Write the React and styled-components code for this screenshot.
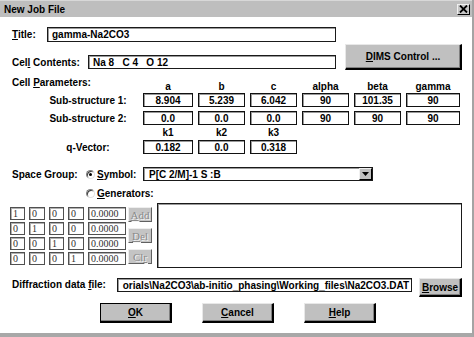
import styled, { createGlobalStyle } from "styled-components";

const GlobalStyle = createGlobalStyle`
  html, body {
    margin: 0;
    padding: 0;
    background: #ffffff;
  }
`;

const PARAM_COLS = "126px 50px 47px 47px 47px 47px 54px";

function Key({ children }) {
  return <u>{children}</u>;
}

function App() {
  const headers = ["a", "b", "c", "alpha", "beta", "gamma"];
  const sub1 = ["8.904", "5.239", "6.042", "90", "101.35", "90"];
  const sub2 = ["0.0", "0.0", "0.0", "90", "90", "90"];
  const kHeads = ["k1", "k2", "k3"];
  const qVec = ["0.182", "0.0", "0.318"];
  const gens = [
    ["1", "0", "0", "0", "0.0000"],
    ["0", "1", "0", "0", "0.0000"],
    ["0", "0", "1", "0", "0.0000"],
    ["0", "0", "0", "1", "0.0000"],
  ];
  const genWidths = [15, 16, 15, 16, 38];

  return (
    <>
      <GlobalStyle />
      <Dialog>
        <TitleBar>
          <TitleText>New Job File</TitleText>
          <CloseBtn>
            <svg width="9" height="8" viewBox="0 0 9 8">
              <path d="M1 0.5 L8 7.5 M8 0.5 L1 7.5" stroke="#000" strokeWidth="1.8" />
            </svg>
          </CloseBtn>
        </TitleBar>

        <Body>
          <TopSection>
            <TopFields>
              <FieldRow $h={15}>
                <Label $w={35}>
                  <Key>T</Key>itle:
                </Label>
                <TextBox $w={289} $h={15}>gamma-Na2CO3</TextBox>
              </FieldRow>
              <FieldRow $h={14} $top={13}>
                <Label $w={76}>
                  Cel<Key>l</Key> Contents:
                </Label>
                <TextBox $w={248} $h={14}>Na 8&nbsp;&nbsp;&nbsp;C 4&nbsp;&nbsp;&nbsp;O 12</TextBox>
              </FieldRow>
            </TopFields>
            <PushButton $w={117} $h={26} $top={17}>
              <Key>D</Key>IMS Control ...
            </PushButton>
          </TopSection>

          <ParamRow $h={15} $top={7}>
            <SectionLabel>
              Cell <Key>P</Key>arameters:
            </SectionLabel>
            {headers.map((h) => (
              <ColHead key={h}>{h}</ColHead>
            ))}
          </ParamRow>
          <ParamRow $h={14} $top={1}>
            <RowLabel>Sub-structure 1:</RowLabel>
            {sub1.map((v, i) => (
              <ValueBox key={i}>{v}</ValueBox>
            ))}
          </ParamRow>
          <ParamRow $h={14} $top={4}>
            <RowLabel>Sub-structure 2:</RowLabel>
            {sub2.map((v, i) => (
              <ValueBox key={i}>{v}</ValueBox>
            ))}
          </ParamRow>
          <ParamRow $h={11} $top={2}>
            <span />
            {kHeads.map((h) => (
              <ColHead key={h}>{h}</ColHead>
            ))}
          </ParamRow>
          <ParamRow $h={14} $top={2}>
            <RowLabel>q-Vector:</RowLabel>
            {qVec.map((v, i) => (
              <ValueBox key={i}>{v}</ValueBox>
            ))}
          </ParamRow>

          <FieldRow $h={14} $top={13}>
            <Label $w={74}>Space Group:</Label>
            <RadioOption $w={57}>
              <Radio $checked />
              <span>
                <Key>S</Key>ymbol:
              </span>
            </RadioOption>
            <Combo>
              <ComboText>P[C 2/M]-1 S :B</ComboText>
              <ComboArrow>
                <svg width="7" height="4" viewBox="0 0 7 4">
                  <path d="M0 0 H7 L3.5 4 Z" fill="#000" />
                </svg>
              </ComboArrow>
            </Combo>
          </FieldRow>
          <FieldRow $h={12} $top={6} $indent={74}>
            <RadioOption>
              <Radio />
              <span>
                <Key>G</Key>enerators:
              </span>
            </RadioOption>
          </FieldRow>

          <GenSection>
            <GenGrid>
              {gens.map((row, r) => (
                <GenRow key={r}>
                  {row.map((v, c) => (
                    <GenCell key={c} $w={genWidths[c]}>
                      {v}
                    </GenCell>
                  ))}
                </GenRow>
              ))}
            </GenGrid>
            <GenButtons>
              <SmallBtn>
                <Key>A</Key>dd
              </SmallBtn>
              <SmallBtn>
                <Key>D</Key>el
              </SmallBtn>
              <SmallBtn>
                Cl<Key>r</Key>
              </SmallBtn>
            </GenButtons>
            <ListBox />
          </GenSection>

          <FieldRow $h={19} $top={10} $align="flex-start">
            <Label $w={105} $line={14}>
              Diffraction data <Key>f</Key>ile:
            </Label>
            <PathBox>
              <span>orials\Na2CO3\ab-initio_phasing\Working_files\Na2CO3.DAT</span>
            </PathBox>
            <PushButton $w={43} $h={19} $left={7}>
              <Key>B</Key>rowse
            </PushButton>
          </FieldRow>

          <ButtonBar>
            <PushButton $w={72} $h={20} $default>
              <Key>O</Key>K
            </PushButton>
            <PushButton $w={72} $h={20}>
              <Key>C</Key>ancel
            </PushButton>
            <PushButton $w={72} $h={20}>
              <Key>H</Key>elp
            </PushButton>
          </ButtonBar>
        </Body>
      </Dialog>
    </>
  );
}

export default App;

const Dialog = styled.div`
  width: 474px;
  height: 337px;
  box-sizing: border-box;
  display: flex;
  flex-direction: column;
  background: #ffffff;
  border-right: 2px solid #a4a4a4;
  border-bottom: 4px solid #a8a8a8;
  overflow: hidden;
  font-family: "Liberation Sans", Arial, sans-serif;
  font-weight: bold;
  font-size: 10px;
  color: #000;

  u {
    text-decoration: underline;
    text-underline-offset: 1px;
  }
`;

const TitleBar = styled.div`
  height: 17px;
  flex: 0 0 17px;
  display: flex;
  align-items: center;
  justify-content: space-between;
  padding: 0 2px 0 4px;
  background: #bebebe;
  border-top: 1px solid #d8d8d8;
  box-sizing: border-box;
`;

const TitleText = styled.span`
  font-size: 10px;
  font-weight: bold;
`;

const CloseBtn = styled.div`
  width: 13px;
  height: 11px;
  box-sizing: border-box;
  display: flex;
  align-items: center;
  justify-content: center;
  background: #c6c6c6;
  border: 1px solid;
  border-color: #f0f0f0 #000 #000 #f0f0f0;
`;

const Body = styled.div`
  display: flex;
  flex-direction: column;
  padding: 0 10px 0 12px;
`;

const TopSection = styled.div`
  display: flex;
  justify-content: space-between;
  align-items: flex-start;
  margin-top: 10px;
`;

const TopFields = styled.div`
  display: flex;
  flex-direction: column;
`;

const FieldRow = styled.div`
  display: flex;
  align-items: ${({ $align }) => $align || "center"};
  height: ${({ $h }) => $h}px;
  margin-top: ${({ $top }) => $top || 0}px;
  padding-left: ${({ $indent }) => $indent || 0}px;
`;

const Label = styled.span`
  flex: 0 0 ${({ $w }) => $w}px;
  white-space: nowrap;
  line-height: ${({ $line }) => ($line ? `${$line}px` : "normal")};
`;

const TextBox = styled.div`
  width: ${({ $w }) => $w}px;
  height: ${({ $h }) => $h}px;
  box-sizing: border-box;
  border: 1px solid #1a1a1a;
  box-shadow: inset 1px 1px 0 #9a9a9a;
  padding: 0 4px;
  display: flex;
  align-items: center;
  white-space: pre;
  background: #fff;
`;

const PushButton = styled.div`
  width: ${({ $w }) => $w}px;
  height: ${({ $h }) => $h}px;
  margin-top: ${({ $top }) => $top || 0}px;
  margin-left: ${({ $left }) => $left || 0}px;
  box-sizing: border-box;
  flex: 0 0 auto;
  display: flex;
  align-items: center;
  justify-content: center;
  background: #c0c0c0;
  border-top: 1px solid ${({ $default }) => ($default ? "#000" : "#e8e8e8")};
  border-left: 1px solid ${({ $default }) => ($default ? "#000" : "#e8e8e8")};
  border-right: 2px solid #000;
  border-bottom: 2px solid #000;
  box-shadow: inset -1px -1px 0 #808080;
  white-space: nowrap;
`;

const ParamRow = styled.div`
  display: grid;
  grid-template-columns: ${PARAM_COLS};
  column-gap: 5px;
  height: ${({ $h }) => $h}px;
  margin-top: ${({ $top }) => $top || 0}px;
`;

const SectionLabel = styled.span`
  align-self: start;
  line-height: 12px;
  white-space: nowrap;
`;

const ColHead = styled.span`
  align-self: end;
  text-align: center;
  line-height: 11px;
`;

const RowLabel = styled.span`
  align-self: center;
  text-align: center;
  padding-left: 26px;
  white-space: nowrap;
`;

const ValueBox = styled.div`
  box-sizing: border-box;
  border: 1px solid #111;
  box-shadow: inset 1px 1px 0 #9a9a9a;
  display: flex;
  align-items: center;
  justify-content: center;
  background: #fff;
`;

const RadioOption = styled.div`
  display: flex;
  align-items: center;
  gap: 2px;
  flex: 0 0 ${({ $w }) => ($w ? `${$w}px` : "auto")};
  white-space: nowrap;
`;

const Radio = styled.span`
  position: relative;
  width: 9px;
  height: 9px;
  box-sizing: border-box;
  border-radius: 50%;
  border: 1px solid;
  border-color: #808080 #e0e0e0 #e0e0e0 #808080;
  background: #fff;
  box-shadow: inset 1px 1px 0 #404040;

  &::after {
    content: "";
    display: ${({ $checked }) => ($checked ? "block" : "none")};
    position: absolute;
    left: 2px;
    top: 2px;
    width: 3px;
    height: 3px;
    border-radius: 50%;
    background: #000;
  }
`;

const Combo = styled.div`
  width: 230px;
  height: 14px;
  box-sizing: border-box;
  display: flex;
  align-items: stretch;
  border: 1px solid #1a1a1a;
  box-shadow: inset 1px 1px 0 #9a9a9a;
  background: #fff;
`;

const ComboText = styled.span`
  flex: 1;
  display: flex;
  align-items: center;
  padding-left: 5px;
`;

const ComboArrow = styled.span`
  width: 13px;
  box-sizing: border-box;
  display: flex;
  align-items: center;
  justify-content: center;
  background: #c0c0c0;
  border: 1px solid;
  border-color: #f0f0f0 #000 #000 #f0f0f0;
`;

const GenSection = styled.div`
  display: flex;
  align-items: flex-start;
  margin-top: 4px;
  margin-left: -2px;
  height: 65px;
`;

const GenGrid = styled.div`
  display: flex;
  flex-direction: column;
  gap: 2px;
  padding-top: 4px;
`;

const GenRow = styled.div`
  display: flex;
  gap: 4px;
`;

const GenCell = styled.div`
  width: ${({ $w }) => $w}px;
  height: 13px;
  box-sizing: border-box;
  border: 1px solid #505050;
  box-shadow: inset 1px 1px 0 #b0b0b0;
  padding-left: 2px;
  display: flex;
  align-items: center;
  font-family: "Liberation Serif", "Times New Roman", serif;
  font-weight: normal;
  font-size: 10px;
  color: #303030;
`;

const GenButtons = styled.div`
  display: flex;
  flex-direction: column;
  gap: 6px;
  padding-top: 4px;
  margin-left: 2px;
`;

const SmallBtn = styled.div`
  width: 24px;
  height: 15px;
  box-sizing: border-box;
  display: flex;
  align-items: center;
  justify-content: center;
  background: #c4c4c4;
  border: 1px solid;
  border-color: #eeeeee #606060 #606060 #eeeeee;
  font-family: "Liberation Serif", "Times New Roman", serif;
  font-weight: normal;
  font-size: 11px;
  color: #8a8a8a;
  text-shadow: 1px 1px 0 #f4f4f4;
`;

const ListBox = styled.div`
  width: 305px;
  height: 65px;
  margin-left: 5px;
  box-sizing: border-box;
  border: 1px solid #1a1a1a;
  box-shadow: inset 1px 1px 0 #9a9a9a;
  background: #fff;
`;

const PathBox = styled.div`
  width: 295px;
  height: 14px;
  box-sizing: border-box;
  border: 1px solid #1a1a1a;
  box-shadow: inset 1px 1px 0 #9a9a9a;
  display: flex;
  align-items: center;
  justify-content: flex-end;
  padding-right: 2px;
  overflow: hidden;
  white-space: nowrap;
`;

const ButtonBar = styled.div`
  display: flex;
  gap: 30px;
  margin-top: 6px;
  padding-left: 88px;
`;
